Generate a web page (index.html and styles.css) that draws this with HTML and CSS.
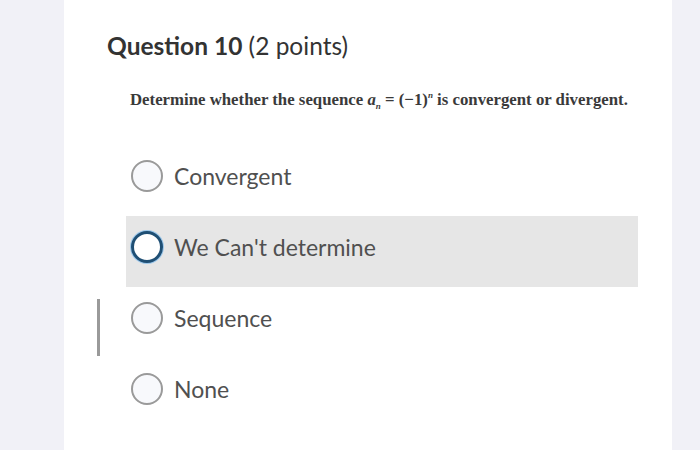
FILE: index.html
```html
<!DOCTYPE html>
<html>
<head>
<meta charset="utf-8">
<link rel="stylesheet" href="styles.css">
</head>
<body>
<div class="card">
  <h1 class="title"><span class="title-strong">Question 10</span> (2 points)</h1>
  <p class="prompt">Determine whether the sequence <i>a</i><sub>n</sub> = (−1)<sup>n</sup> is convergent or divergent.</p>
  <div class="options">
    <div class="option"><span class="radio"></span><span class="label">Convergent</span></div>
    <div class="option option-hover"><span class="radio radio-focus"></span><span class="label">We Can't determine</span></div>
    <div class="option"><span class="marker"></span><span class="radio"></span><span class="label">Sequence</span></div>
    <div class="option"><span class="radio"></span><span class="label">None</span></div>
  </div>
</div>
</body>
</html>
```
FILE: styles.css
```css
html, body {
  margin: 0;
  padding: 0;
}
body {
  background: #f1f1f7;
  width: 700px;
  height: 450px;
  overflow: hidden;
}
.card {
  margin-left: 64px;
  width: 608px;
  height: 450px;
  background: #ffffff;
  padding-top: 30px;
  box-sizing: border-box;
}
.title {
  margin: 0 0 0 43px;
  font-family: Lato, "Liberation Sans", sans-serif;
  font-weight: 400;
  font-size: 24.5px;
  line-height: 32px;
  color: #333333;
}
.title-strong {
  font-weight: 700;
}
.prompt {
  margin: 28px 0 0 66px;
  font-family: "Liberation Serif", serif;
  font-weight: 700;
  font-size: 16.8px;
  line-height: 20px;
  color: #3a3a3a;
}
.prompt sub, .prompt sup {
  font-size: 9px;
  font-style: italic;
  line-height: 0;
}
.options {
  margin: 35px 0 0 62px;
  width: 512px;
  display: flex;
  flex-direction: column;
}
.option {
  position: relative;
  display: flex;
  align-items: center;
  height: 71px;
  padding: 0 0 10px 5px;
  box-sizing: border-box;
}
.option-hover {
  background: #e6e6e6;
}
.radio {
  width: 32px;
  height: 32px;
  border-radius: 50%;
  border: 2px solid #9a9a9a;
  background: #f8f9fc;
  box-sizing: border-box;
  flex: none;
}
.radio-focus {
  border: 3px solid #1f4f74;
  box-shadow: 0 0 0 1px #9cc7ea;
  background: #ffffff;
}
.label {
  margin-left: 11px;
  font-family: Lato, "Liberation Sans", sans-serif;
  font-size: 23px;
  color: #505050;
}
.marker {
  position: absolute;
  left: -29px;
  top: 12px;
  width: 3px;
  height: 57px;
  background: #9a9a9a;
}
```
